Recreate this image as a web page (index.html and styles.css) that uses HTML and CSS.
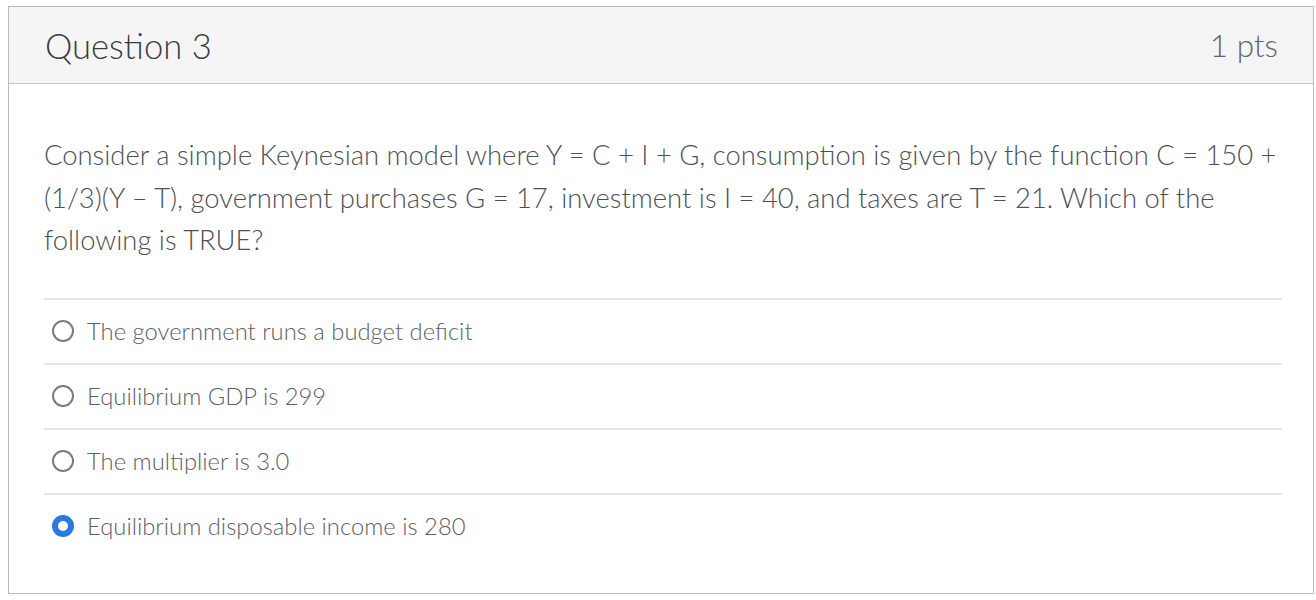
FILE: index.html
```html
<!DOCTYPE html>
<html lang="en">
<head>
<meta charset="utf-8">
<title>Question 3</title>
<link rel="stylesheet" href="styles.css">
</head>
<body>
<div class="card">
  <div class="card-header">
    <span class="q-title">Question 3</span>
    <span class="q-pts">1 pts</span>
  </div>
  <div class="card-body">
    <p class="q-text">Consider a simple Keynesian model where Y = C + I + G, consumption is given by the function C = 150 + (1/3)(Y – T), government purchases G = 17, investment is I = 40, and taxes are T = 21. Which of the following is TRUE?</p>
    <div class="answers">
      <div class="answer"><span class="radio"></span><span class="a-text">The government runs a budget deficit</span></div>
      <div class="answer"><span class="radio"></span><span class="a-text">Equilibrium GDP is 299</span></div>
      <div class="answer"><span class="radio"></span><span class="a-text">The multiplier is 3.0</span></div>
      <div class="answer"><span class="radio checked"></span><span class="a-text">Equilibrium disposable income is 280</span></div>
    </div>
  </div>
</div>
</body>
</html>
```

FILE: styles.css
```css
html, body {
  background: #ffffff;
}
body {
  margin: 6px 0 0 8px;
  font-family: Lato, "Open Sans", "Liberation Sans", sans-serif;
  font-weight: 300;
}
.card {
  width: 1306px;
  box-sizing: border-box;
  border: 1px solid #b9bcbf;
  background: #fff;
}
.card-header {
  height: 76px;
  background: #f5f5f5;
  border-bottom: 1px solid #c4c7ca;
  display: flex;
  align-items: center;
  justify-content: space-between;
  padding: 0 35px 0 36px;
}
.q-title {
  font-size: 34.6px;
  color: #383e43;
}
.q-pts {
  font-size: 31.5px;
  color: #62666a;
}
.card-body {
  padding: 50px 31px 35px 35px;
}
.q-text {
  margin: 0 0 36px 0;
  font-size: 27.4px;
  line-height: 42.5px;
  color: #4d5155;
}
.answers {
  display: flex;
  flex-direction: column;
}
.answer {
  height: 63px;
  border-top: 2px solid #e6e6e6;
  display: flex;
  align-items: center;
  padding-left: 8px;
  gap: 13px;
}
.radio {
  width: 22px;
  height: 22px;
  box-sizing: border-box;
  border-radius: 50%;
  border: 2.5px solid #7a7c7e;
  flex: none;
}
.radio.checked {
  border: 6.5px solid #2c79de;
}
.a-text {
  font-size: 23.8px;
  color: #5d6165;
}
```
